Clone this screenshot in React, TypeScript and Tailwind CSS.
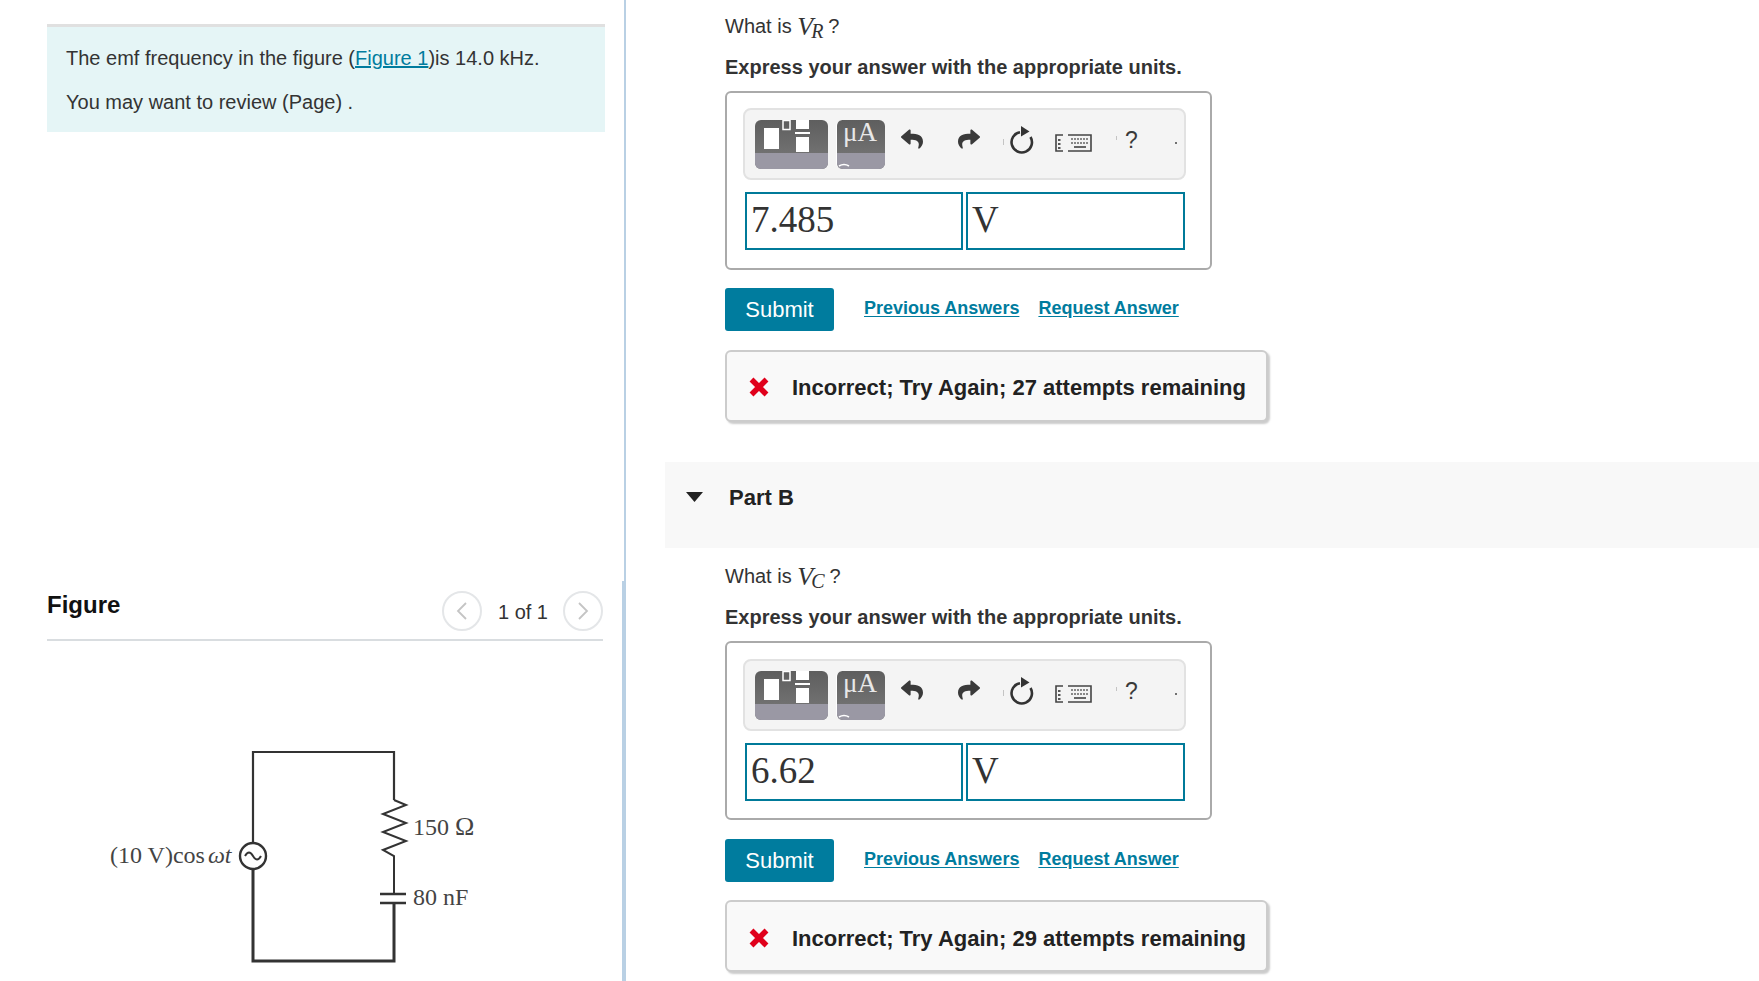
import React from "react";
import { FaReply, FaShare } from "react-icons/fa";

const serif = "font-['Liberation_Serif',serif]";

function TemplateButton() {
  return (
    <div className="relative w-[73px] h-[49px] rounded-[6px] overflow-hidden bg-gradient-to-b from-[#5e5e5e] to-[#7a7a7a]">
      <div className="absolute left-0 right-0 bottom-0 h-[16px] bg-[#9a98a4]" />
      <svg width="73" height="49" viewBox="0 0 73 49" className="absolute left-0 top-0">
        <rect x="9" y="8" width="15" height="21" fill="#fff" />
        <rect x="28" y="0.5" width="7" height="9" fill="none" stroke="#fff" strokeWidth="1.5" />
        <rect x="41" y="0" width="13" height="9" fill="#fff" />
        <rect x="40" y="12" width="15" height="2" fill="#fff" />
        <rect x="41" y="17" width="13" height="15" fill="#fff" />
      </svg>
    </div>
  );
}

function UnitButton() {
  return (
    <div className="relative w-[49px] h-[49px] rounded-[6px] bg-gradient-to-b from-[#5e5e5e] to-[#7a7a7a] border-l border-white">
      <div className="absolute left-0 right-0 bottom-0 h-[16px] rounded-b-[6px] bg-[#9a98a4]" />
      <span className={`${serif} absolute left-[6px] top-[-3px] text-[27px] leading-[30px] text-[#e8e8e8]`}>μA</span>
      <svg width="48" height="49" viewBox="0 0 48 49" className="absolute left-0 top-0">
        <path d="M2 46 Q7 43 12 46" fill="none" stroke="#fff" strokeWidth="1.5" />
      </svg>
    </div>
  );
}

function ResetIcon() {
  return (
    <svg width="26" height="28" viewBox="0 0 26 28">
      <path d="M11 6.2 A10.2 10.2 0 1 0 21.5 11" fill="none" stroke="#333" strokeWidth="2.6" />
      <path d="M12 0 L20.5 5.5 L12 10.5 Z" fill="#333" />
    </svg>
  );
}

function KeyboardIcon() {
  return (
    <svg width="37" height="18" viewBox="0 0 37 18">
      <path d="M8 1 H1 V17 H8" fill="none" stroke="#444" strokeWidth="1.6" />
      <rect x="3" y="5" width="2.5" height="2" fill="#555" />
      <rect x="3" y="9" width="2.5" height="2" fill="#555" />
      <rect x="3" y="13" width="2.5" height="2" fill="#555" />
      <path d="M13 1 H36 V17 H13" fill="none" stroke="#444" strokeWidth="1.6" />
      <path d="M16 5 H33 M16 9 H33" stroke="#666" strokeWidth="1.6" strokeDasharray="2 1" />
      <path d="M19 13 H31" stroke="#444" strokeWidth="1.6" />
    </svg>
  );
}

function Toolbar() {
  return (
    <div className="w-[443px] h-[72px] rounded-[8px] border-2 border-[#e2e2e2] bg-[#f4f4f4] flex items-center pl-[10px] text-[#3a3a3a]">
      <TemplateButton />
      <div className="ml-[8px]"><UnitButton /></div>
      <FaReply className="ml-[16px] mb-[11px] text-[#3a3a3a]" size={22} />
      <FaShare className="ml-[35px] mb-[11px] text-[#3a3a3a]" size={22} />
      <span className="ml-[23px] w-px h-[6px] bg-[#c4c4c4] mb-[5px]" />
      <div className="ml-[5px] mb-[9px]"><ResetIcon /></div>
      <div className="ml-[20px] mb-[3px]"><KeyboardIcon /></div>
      <span className="ml-[24px] w-px h-[4px] bg-[#c4c4c4] mb-[12px]" />
      <span className="ml-[8px] mb-[7px] font-['Liberation_Sans',sans-serif] text-[23px] leading-none text-[#3a3a3a]">?</span>
      <span className="ml-[37px] mb-[3px] w-[2px] h-[2px] rounded-full bg-[#444]" />
    </div>
  );
}

function AnswerField({ value, width }: { value: string; width: string }) {
  return (
    <div className={`${width} h-[58px] border-2 border-[#007a99] bg-white flex items-center pl-[4px] pb-[3px] ${serif} text-[37px] text-[#333]`}>
      {value}
    </div>
  );
}

function Question({ symbol, sub, value, attempts, lower }: { symbol: string; sub: string; value: string; attempts: number; lower?: boolean }) {
  return (
    <div className="flex flex-col font-['Liberation_Sans',sans-serif]">
      <div className="h-[28px] flex items-center text-[20px] text-[#333]">
        What is&nbsp;
        <span className={`${serif} italic text-[26px]`}>{symbol}</span>
        <span className={`${serif} italic text-[20px] relative top-[5px] -ml-[2px]`}>{sub}</span>
        <span className="ml-[5px]">?</span>
      </div>
      <div className="mt-[13px] h-[28px] flex items-center text-[20px] font-bold text-[#333]">
        Express your answer with the appropriate units.
      </div>
      <div className={`mt-[10px] w-[487px] h-[179px] rounded-[6px] border-2 border-[#aaaaaa] pl-[16px] ${lower ? "pt-[16px]" : "pt-[15px]"}`}>
        <Toolbar />
        <div className="mt-[12px] ml-[2px] flex gap-[3px]">
          <AnswerField value={value} width="w-[218px]" />
          <AnswerField value="V" width="w-[219px]" />
        </div>
      </div>
      <div className={`flex items-start ${lower ? "mt-[19px]" : "mt-[18px]"}`}>
        <div className="w-[109px] h-[43px] rounded-[3px] bg-[#007c9e] text-white text-[22px] flex items-center justify-center">
          Submit
        </div>
        <a className="ml-[30px] mt-[8px] text-[18px] leading-[24px] font-bold text-[#007c9e] underline underline-offset-2">Previous Answers</a>
        <a className="ml-[19px] mt-[8px] text-[18px] leading-[24px] font-bold text-[#007c9e] underline underline-offset-2">Request Answer</a>
      </div>
      <div className={`w-[543px] h-[72px] rounded-[6px] border-2 border-[#cccccc] bg-[#f9f9f9] shadow-[2px_2px_2px_#cccccc] flex items-center pl-[21px] ${lower ? "mt-[18px] pt-[4px]" : "mt-[19px] pt-[2px]"}`}>
        <svg width="22" height="22" viewBox="0 0 22 22">
          <path d="M3.5 3.5 L18.5 18.5 M18.5 3.5 L3.5 18.5" stroke="#e0001b" strokeWidth="5.5" />
        </svg>
        <span className="ml-[22px] text-[22px] font-bold text-[#222]">Incorrect; Try Again; {attempts} attempts remaining</span>
      </div>
    </div>
  );
}

function Circuit() {
  return (
    <svg width="420" height="251" viewBox="0 0 420 251" className="block">
      <g fill="none" stroke="#333" strokeLinejoin="miter">
        <path d="M163 113 V22 H304 V70" strokeWidth="2.2" />
        <path d="M304 70 L316 75 L293 84 L316 93 L293 102 L316 111 L293 120 L304 126 V164" strokeWidth="2" />
        <path d="M290 164 H316 M290 173 H316" strokeWidth="2.4" />
        <path d="M304 173 V231 H163 V139" strokeWidth="3" />
        <circle cx="163" cy="126" r="13" strokeWidth="2.4" />
        <path d="M155 126 Q159 119 163 126 T171 126" strokeWidth="2" />
      </g>
      <g fontFamily="'Liberation Serif', serif" fontSize="24" fill="#444">
        <text x="323" y="105">150 <tspan fontSize="26">Ω</tspan></text>
        <text x="323" y="175">80 nF</text>
        <text x="20" y="133">(10 V)cos<tspan fontStyle="italic" dx="3">ωt</tspan></text>
      </g>
    </svg>
  );
}

function NavCircle({ right }: { right?: boolean }) {
  return (
    <div className="w-[40px] h-[40px] rounded-full border-2 border-[#e4e6e8] flex items-center justify-center">
      <svg width="12" height="18" viewBox="0 0 12 18">
        <path d={right ? "M2 1 L10 9 L2 17" : "M10 1 L2 9 L10 17"} fill="none" stroke="#c4c4c4" strokeWidth="1.8" />
      </svg>
    </div>
  );
}

export default function App() {
  return (
    <div className="w-[1759px] h-[981px] overflow-hidden flex bg-white font-['Liberation_Sans',sans-serif]">
      <div className="w-[622px] shrink-0 pt-[24px] flex flex-col">
        <div className="ml-[47px] w-[558px] h-[108px] border-t-[3px] border-[#e0e0e0] bg-[#e5f5f6] pl-[19px] pt-[17px] text-[20px] leading-[28px] text-[#333]">
          <p>The emf frequency in the figure (<a className="text-[#007c9e] underline">Figure 1</a>)is 14.0 kHz.</p>
          <p className="mt-[16px]">You may want to review (Page) .</p>
        </div>
        <div className="mt-[452px] ml-[47px] w-[556px] h-[57px] border-b-2 border-[#d9dde0] flex items-start pt-[7px]">
          <h2 className="text-[24px] leading-[28px] font-bold text-[#111]">Figure</h2>
          <div className="ml-auto flex items-center">
            <NavCircle />
            <span className="ml-[16px] mr-[15px] pt-[1px] text-[20px] text-[#333]">1 of 1</span>
            <NavCircle right />
          </div>
        </div>
        <div className="mt-[89px] ml-[90px]">
          <Circuit />
        </div>
      </div>
      <div className="w-[4px] shrink-0 flex flex-col">
        <div className="h-[581px] w-[2px] ml-[2px] bg-[#b9d0e4]" />
        <div className="flex-1 bg-[#b9d0e4]" />
      </div>
      <div className="flex-1 pl-[39px] pt-[12px] flex flex-col">
        <div className="pl-[60px]">
          <Question symbol="V" sub="R" value="7.485" attempts={27} />
        </div>
        <div className="mt-[40px] h-[86px] bg-[#f8f8f8] flex items-start pt-[21px] pl-[21px]">
          <svg width="17" height="10" viewBox="0 0 17 10" className="mt-[9px]">
            <path d="M0 0 H17 L8.5 10 Z" fill="#222" />
          </svg>
          <span className="ml-[26px] text-[22px] leading-[30px] font-bold text-[#222]">Part B</span>
        </div>
        <div className="mt-[14px] pl-[60px]">
          <Question symbol="V" sub="C" value="6.62" attempts={29} lower />
        </div>
      </div>
    </div>
  );
}
